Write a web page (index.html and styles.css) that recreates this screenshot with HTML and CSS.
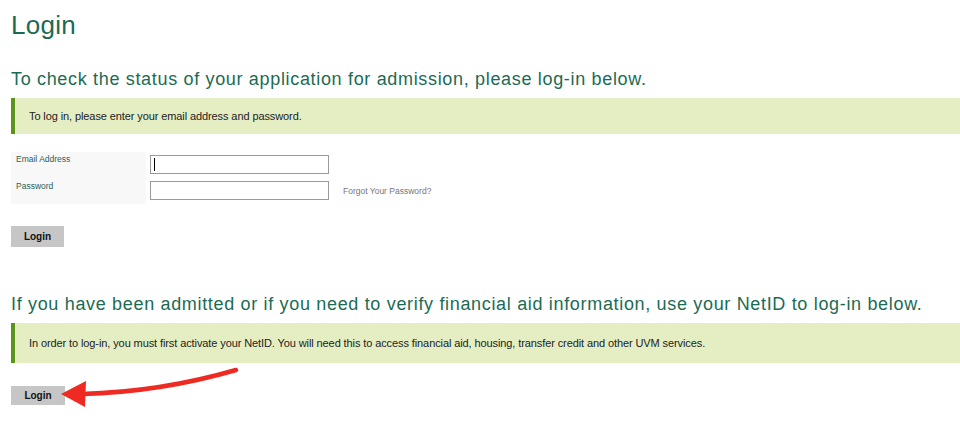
FILE: index.html
```html
<!DOCTYPE html>
<html lang="en">
<head>
<meta charset="utf-8">
<title>Login</title>
<link rel="stylesheet" href="styles.css">
</head>
<body>
<div class="page">
  <h1 class="title">Login</h1>

  <h2 class="section-title first">To check the status of your application for admission, please log-in below.</h2>
  <div class="notice n1">To log in, please enter your email address and password.</div>

  <form class="login-form">
    <div class="labels">
      <label class="lbl" for="email">Email Address</label>
      <label class="lbl pw" for="password">Password</label>
    </div>
    <div class="fields">
      <div class="field caret"><input class="txt" id="email" type="text"></div>
      <div class="row2">
        <div class="field"><input class="txt" id="password" type="password"></div>
        <a class="forgot" href="#">Forgot Your Password?</a>
      </div>
    </div>
  </form>
  <button class="btn b1" type="button">Login</button>

  <h2 class="section-title second">If you have been admitted or if you need to verify financial aid information, use your NetID to log-in below.</h2>
  <div class="notice n2">In order to log-in, you must first activate your NetID. You will need this to access financial aid, housing, transfer credit and other UVM services.</div>

  <button class="btn b2" type="button">Login</button>

  <svg class="arrow" width="960" height="445" viewBox="0 0 960 445" aria-hidden="true">
    <path d="M236 370 Q160 392 82 394" fill="none" stroke="#ee2a22" stroke-width="4.5" stroke-linecap="round"/>
    <polygon points="61,394 86,381 85,407" fill="#ee2a22"/>
  </svg>
</div>
</body>
</html>
```
FILE: styles.css
```css
html, body {
  margin: 0;
  padding: 0;
  background: #ffffff;
}
body {
  font-family: "Liberation Sans", Arial, Helvetica, sans-serif;
  width: 960px;
  height: 445px;
  overflow: hidden;
}
.page {
  position: relative;
  padding: 0 0 0 11px;
  display: flex;
  flex-direction: column;
  align-items: flex-start;
}
.title {
  margin: 10px 0 0;
  font-size: 26px;
  line-height: 30px;
  font-weight: normal;
  color: #1b6b54;
  letter-spacing: 0.3px;
}
.section-title {
  margin: 0;
  font-size: 18px;
  line-height: 22px;
  font-weight: normal;
  color: #1b6b54;
  letter-spacing: 0.67px;
  white-space: nowrap;
}
.section-title.first { margin-top: 28px; }
.section-title.second { margin-top: 46px; }
.notice {
  align-self: stretch;
  margin-top: 8px;
  background: #e5eec3;
  border-left: 4px solid #5b9419;
  padding: 11px 0 11px 14px;
  font-size: 11px;
  line-height: 14px;
  letter-spacing: -0.1px;
  color: #222;
}
.notice.n2 { padding: 13px 0 13px 14px; }
.login-form {
  margin-top: 18px;
  display: flex;
  align-items: flex-start;
  gap: 4px;
}
.labels {
  width: 130px;
  height: 50px;
  background: #f8f8f8;
  padding: 2px 0 0 5px;
  display: flex;
  flex-direction: column;
}
.lbl {
  font-size: 8.5px;
  line-height: 11px;
  color: #2f5d55;
}
.lbl.pw { margin-top: 16px; }
.fields {
  padding-top: 3px;
  display: flex;
  flex-direction: column;
  gap: 7px;
}
.row2 {
  display: flex;
  align-items: center;
  gap: 14px;
}
.field {
  position: relative;
  display: flex;
}
.txt {
  box-sizing: border-box;
  width: 179px;
  height: 19px;
  margin: 0;
  border: 1px solid #9a9a9a;
  background: #fff;
  padding: 0 4px;
  outline: none;
}
.caret::after {
  content: "";
  position: absolute;
  left: 4px;
  top: 3px;
  width: 1px;
  height: 13px;
  background: #000;
}
.forgot {
  font-size: 8.5px;
  line-height: 11px;
  color: #777;
  text-decoration: none;
  margin-top: 1px;
}
.btn {
  margin: 22px 0 0;
  box-sizing: border-box;
  width: 53px;
  height: 21px;
  border: none;
  background: #c6c6c6;
  font-family: "Liberation Sans", Arial, sans-serif;
  font-size: 10px;
  font-weight: bold;
  color: #111;
  padding: 0;
}
.btn.b2 {
  margin-top: 23px;
  width: 54px;
  height: 19px;
}
.arrow {
  position: absolute;
  left: 0;
  top: 0;
  pointer-events: none;
}
```
